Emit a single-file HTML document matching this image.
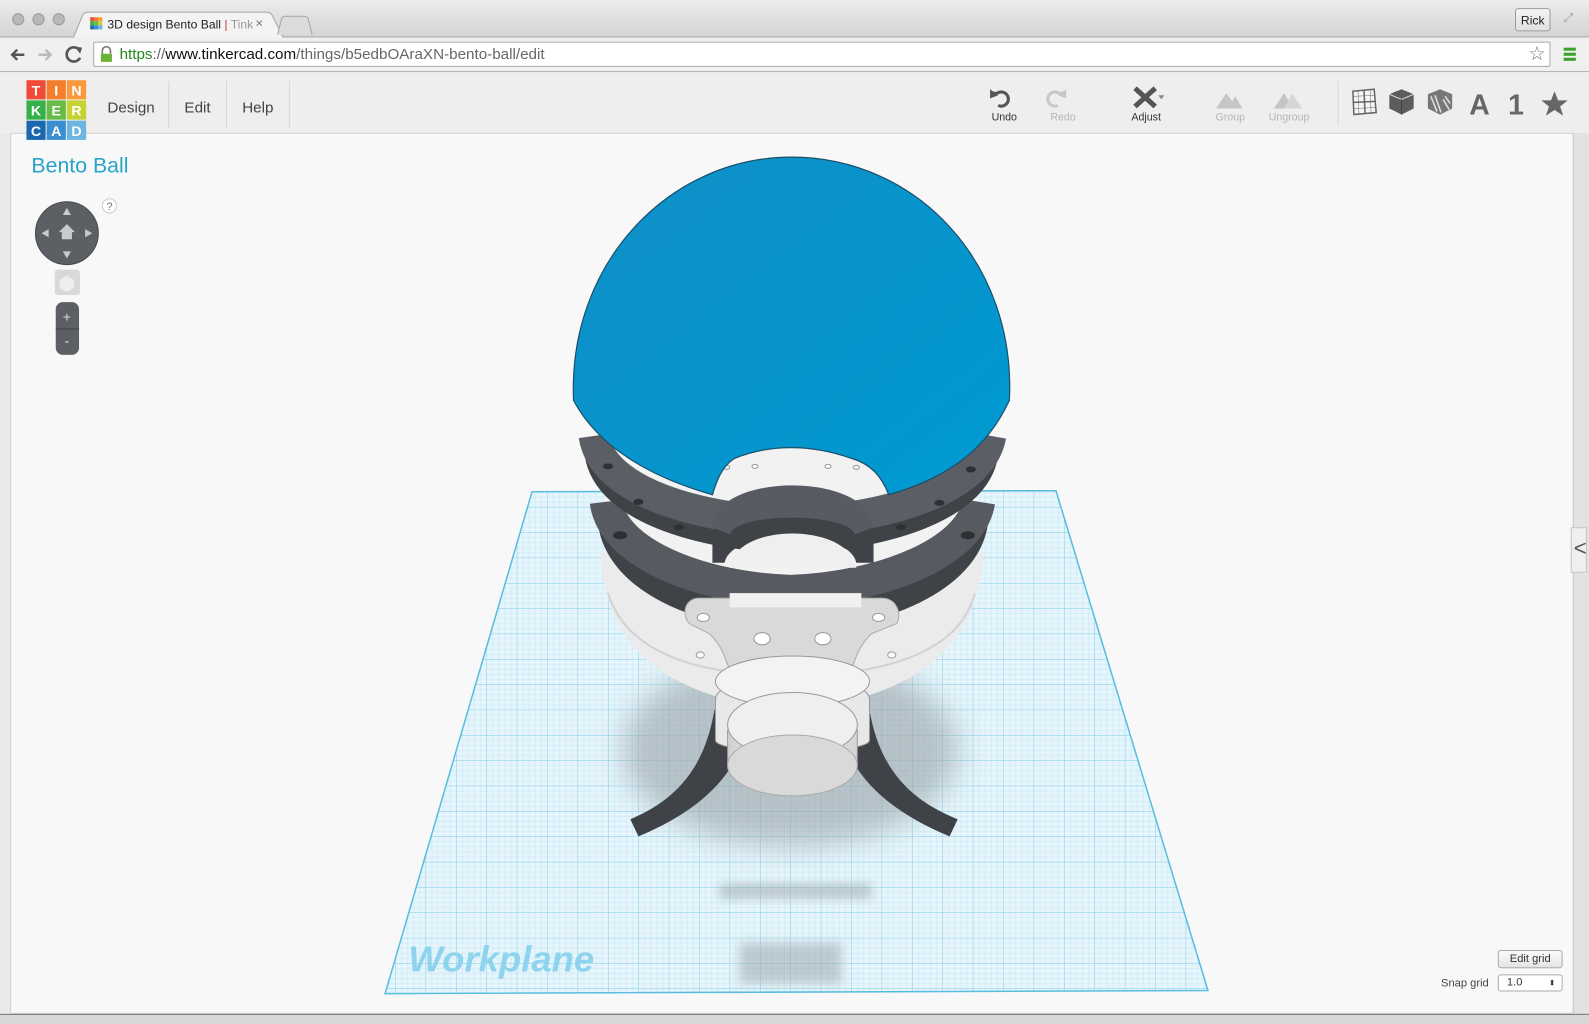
<!DOCTYPE html>
<html><head><meta charset="utf-8"><style>
*{margin:0;padding:0;box-sizing:border-box}
html,body{width:1589px;height:1024px;overflow:hidden;background:#5a5a5a}
#w{position:absolute;left:0;top:0;width:1568px;height:1010px;transform:scale(1.01339,1.01386);transform-origin:0 0;font-family:"Liberation Sans",sans-serif;background:#e9e9e9;overflow:hidden}
.abs{position:absolute}
</style></head><body><div id="w">
<!-- tab strip -->
<div class="abs" style="left:0;top:0;width:1568px;height:37px;background:linear-gradient(#ececec,#d4d4d4);border-bottom:1px solid #a8a8a8"></div>
<div class="abs" style="left:12px;top:13px;width:12px;height:12px;border-radius:50%;background:#b9b9b9;border:1px solid #9a9a9a"></div>
<div class="abs" style="left:32px;top:13px;width:12px;height:12px;border-radius:50%;background:#b9b9b9;border:1px solid #9a9a9a"></div>
<div class="abs" style="left:52px;top:13px;width:12px;height:12px;border-radius:50%;background:#b9b9b9;border:1px solid #9a9a9a"></div>
<svg class="abs" style="left:0;top:0" width="320" height="40"><path d="M72,38 L82,14 Q84,12 88,12 L262,12 Q266,12 268,14 L280,38 Z" fill="#f3f3f3" stroke="#a5a5a5"/><path d="M274,34 L278,18 Q279,16 282,16 L300,16 Q303,16 304,18 L308,34" fill="#dcdcdc" stroke="#a5a5a5"/>
<g><rect x="89" y="17" width="4" height="4" fill="#f04e37"/><rect x="93" y="17" width="4" height="4" fill="#f57e2a"/><rect x="97" y="17" width="4" height="4" fill="#f9a03c"/><rect x="89" y="21" width="4" height="4" fill="#3ab54a"/><rect x="93" y="21" width="4" height="4" fill="#6abd45"/><rect x="97" y="21" width="4" height="4" fill="#c8d531"/><rect x="89" y="25" width="4" height="4" fill="#1f6db5"/><rect x="93" y="25" width="4" height="4" fill="#3a8fd0"/><rect x="97" y="25" width="4" height="4" fill="#6bb5e0"/></g></svg>
<div class="abs" style="left:106px;top:17px;font-size:12px;color:#222;white-space:nowrap">3D design Bento Ball <span style="color:#c33">|</span> <span style="color:#999">Tink</span></div>
<div class="abs" style="left:252px;top:15px;font-size:13px;color:#777">×</div>
<div class="abs" style="left:1495px;top:8px;width:35px;height:23px;border:1px solid #9c9c9c;border-radius:3px;background:linear-gradient(#f5f5f5,#e0e0e0);font-size:12px;text-align:center;line-height:22px;color:#222">Rick</div>
<div class="abs" style="left:1543px;top:10px;font-size:12px;color:#999">⤢</div>
<!-- toolbar -->
<div class="abs" style="left:0;top:37px;width:1568px;height:34px;background:#f0f0f0;border-bottom:1px solid #b5b5b5"></div>
<svg class="abs" style="left:0;top:37px" width="92" height="34"><path d="M24,17 H12 M17,12 L12,17 L17,22" stroke="#555" stroke-width="2.4" fill="none"/><path d="M38,17 H50 M45,12 L50,17 L45,22" stroke="#bbb" stroke-width="2.4" fill="none"/><path d="M78,12 A7,7 0 1 0 79,20" stroke="#555" stroke-width="2.6" fill="none"/><path d="M74,9 L81,10 L79,16 Z" fill="#555"/></svg>
<div class="abs" style="left:92px;top:41px;width:1438px;height:25px;background:#fff;border:1px solid #a9a9a9;border-radius:2px"></div>
<svg class="abs" style="left:98px;top:45px" width="14" height="17"><path d="M3,8 V5 A4,4 0 0 1 11,5 V8" stroke="#777" stroke-width="1.6" fill="none"/><rect x="1.5" y="8" width="11" height="8" rx="1" fill="#6ab336"/></svg>
<div class="abs" style="left:118px;top:45px;font-size:15px;white-space:nowrap;color:#666"><span style="color:#1e8a1e">https</span>://<span style="color:#111">www.tinkercad.com</span>/things/b5edbOAraXN-bento-ball/edit</div>
<div class="abs" style="left:1508px;top:42px;font-size:19px;color:#777">☆</div>
<svg class="abs" style="left:1542px;top:46px" width="14" height="16"><rect x="1" y="1" width="12" height="3" fill="#3aa12a"/><rect x="1" y="6" width="12" height="3" fill="#3aa12a"/><rect x="1" y="11" width="12" height="3" fill="#3aa12a"/></svg>
<!-- app header -->
<div class="abs" style="left:0;top:72px;width:1568px;height:60px;background:#efeeec"></div>
<!-- canvas -->
<div class="abs" style="left:10px;top:131px;width:1543px;height:869px;background:#f8f8f8;border:1px solid #d0d0d0"></div>
<div class="abs" style="left:1552px;top:131px;width:16px;height:870px;background:#e2e2e2;border-left:1px solid #c8c8c8"></div>
<div class="abs" style="left:0;top:1000px;width:1568px;height:10px;background:#d8d8d8;border-top:1px solid #777"></div>
<svg class="abs" style="left:26px;top:79px;z-index:5" width="60" height="60" font-family="Liberation Sans" font-weight="bold" font-size="14" fill="#fff" text-anchor="middle">
<rect x="0" y="0" width="19" height="19" fill="#ef4a35"/><rect x="20" y="0" width="19" height="19" fill="#f47d2e"/><rect x="40" y="0" width="19" height="19" fill="#f89a3b"/>
<rect x="0" y="20" width="19" height="19" fill="#35b14a"/><rect x="20" y="20" width="19" height="19" fill="#67bb46"/><rect x="40" y="20" width="19" height="19" fill="#c5d331"/>
<rect x="0" y="40" width="19" height="19" fill="#1b68b0"/><rect x="20" y="40" width="19" height="19" fill="#3a8ecf"/><rect x="40" y="40" width="19" height="19" fill="#6cb6e1"/>
<text x="9.5" y="15">T</text><text x="29.5" y="15">I</text><text x="49.5" y="15">N</text><text x="9.5" y="35">K</text><text x="29.5" y="35">E</text><text x="49.5" y="35">R</text><text x="9.5" y="55">C</text><text x="29.5" y="55">A</text><text x="49.5" y="55">D</text></svg>
<div class="abs" style="left:106px;top:98px;font-size:15px;color:#444">Design</div>
<div class="abs" style="left:166px;top:80px;width:1px;height:46px;background:#d6d6d6"></div>
<div class="abs" style="left:182px;top:98px;font-size:15px;color:#444">Edit</div>
<div class="abs" style="left:223px;top:80px;width:1px;height:46px;background:#d6d6d6"></div>
<div class="abs" style="left:239px;top:98px;font-size:15px;color:#444">Help</div>
<div class="abs" style="left:285px;top:80px;width:1px;height:46px;background:#d6d6d6"></div>
<svg class="abs" style="left:960px;top:80px" width="608" height="48" font-family="Liberation Sans" font-size="10.5" text-anchor="middle">
<path d="M25,24 A7,7 0 1 0 24,12 L20,12" stroke="#555" stroke-width="3" fill="none"/><path d="M17,8 L17,17 L25,14 Z" fill="#555"/>
<text x="31" y="39" fill="#333">Undo</text>
<path d="M84,24 A7,7 0 1 1 85,12 L89,12" stroke="#c8c8c8" stroke-width="3" fill="none"/><path d="M92,8 L92,17 L84,14 Z" fill="#c8c8c8"/>
<text x="89" y="39" fill="#b5b5b5">Redo</text>
<path d="M160,7 L180,25 M180,7 L160,25" stroke="#555" stroke-width="5"/><path d="M183,14 L189,14 L186,18 Z" fill="#888"/>
<text x="171" y="39" fill="#333">Adjust</text>
<path d="M240,27 L250,12 L256,20 L259,15 L266,27 Z" fill="#c5c5c5"/><text x="254" y="39" fill="#b5b5b5">Group</text>
<path d="M297,27 L307,12 L313,22 L317,27 Z" fill="#c5c5c5"/><path d="M307,27 L315,12 L325,27 Z" fill="#d6d6d6"/><text x="312" y="39" fill="#b5b5b5">Ungroup</text>
<rect x="360" y="0" width="1" height="44" fill="#d6d6d6"/>
<g stroke="#666" fill="#f5f5f5" stroke-width="1.5"><path d="M375,10 L396,8 L398,31 L376,33 Z"/><path d="M386,9 L387,32 M375.5,21 L397,20" fill="none"/><path d="M380,9 L381,32 M392,8.5 L393,32 M375,15 L397,14 M376,27 L398,26" fill="none" stroke-width=".5"/></g>
<path d="M423,8 L435,13 L435,27 L423,33 L411,27 L411,13 Z" fill="#5c5c5c"/><path d="M411,13 L423,18 L435,13" stroke="#ddd" stroke-width="1" fill="none"/><path d="M423,18 V33" stroke="#444"/>
<path d="M461,8 L473,13 L473,27 L461,33 L449,27 L449,13 Z" fill="#777"/><path d="M452,15 L458,30 M456,14 L462,31 M464,18 L470,28 M466,15 L471,22" stroke="#ddd" stroke-width="1.6"/>
<text x="500" y="33" font-size="28" font-weight="bold" fill="#666">A</text>
<text x="536" y="33" font-size="28" font-weight="bold" fill="#666">1</text>
<path d="M574,10 L577.5,19 L587,19 L579.5,25 L582.5,34 L574,28.5 L565.5,34 L568.5,25 L561,19 L570.5,19 Z" fill="#666"/>
</svg>
<div class="abs" style="left:1550px;top:520px;width:16px;height:45px;background:#efefef;border:1px solid #c4c4c4"></div>
<div class="abs" style="left:1553px;top:528px;font-size:22px;color:#555">&lt;</div>
<div class="abs" style="left:31px;top:152px;font-size:21px;color:#27a4c8">Bento Ball</div>
<svg class="abs" style="left:30px;top:192px" width="95" height="165">
<circle cx="78" cy="11" r="7" fill="#fff" stroke="#ccc"/><text x="78" y="15" font-size="11" text-anchor="middle" fill="#777" font-family="Liberation Sans">?</text>
<circle cx="36" cy="38" r="31" fill="#5c5f64" stroke="#47494d"/>
<path d="M36,13 L32,20 L40,20 Z M36,63 L32,56 L40,56 Z M11,38 L18,34 L18,42 Z M61,38 L54,34 L54,42 Z" fill="#c9cacc"/>
<path d="M36,29 L28,37 L31,37 L31,44 L41,44 L41,37 L44,37 Z" fill="#c9cacc"/>
<rect x="24" y="74" width="25" height="25" rx="3" fill="#d9d9d9"/><path d="M36,80 L43,84 L43,92 L36,96 L29,92 L29,84 Z" fill="#eee"/>
<rect x="25" y="106" width="23" height="52" rx="7" fill="#5c5f64"/><rect x="25" y="132" width="23" height="1" fill="#3e4044"/>
<text x="36" y="125" font-size="14" fill="#ddd" text-anchor="middle" font-family="Liberation Sans">+</text><text x="36" y="149" font-size="14" fill="#ddd" text-anchor="middle" font-family="Liberation Sans">-</text>
</svg>
<!-- scene -->
<svg class="abs" style="left:0;top:0" width="1568" height="1010">
<defs>
<pattern id="g" width="6" height="5" patternUnits="userSpaceOnUse"><rect width="6" height="5" fill="#e6f5fb"/><path d="M0,0 H6 M0,0 V5" stroke="#b6e1f0" stroke-width="0.7"/></pattern>
<pattern id="G" width="30" height="25" patternUnits="userSpaceOnUse"><rect width="30" height="25" fill="url(#g)"/><path d="M0,0 H30 M0,0 V25" stroke="#7dcbe6" stroke-width="0.9"/></pattern>
<filter id="b" x="-50%" y="-50%" width="200%" height="200%"><feGaussianBlur stdDeviation="14"/></filter>
<filter id="b2" x="-50%" y="-50%" width="200%" height="200%"><feGaussianBlur stdDeviation="5"/></filter>
<linearGradient id="dome" x1="0" y1="0" x2="1" y2="1"><stop offset="0" stop-color="#0f8fc6"/><stop offset="1" stop-color="#0099d2"/></linearGradient>
<linearGradient id="cyl" x1="0" x2="1"><stop offset="0" stop-color="#d0d0d0"/><stop offset=".4" stop-color="#f2f2f2"/><stop offset="1" stop-color="#d4d4d4"/></linearGradient>
</defs>
<path d="M525,485 L1042,484 L1192,977 L380,980 Z" fill="url(#G)" stroke="#58bde0" stroke-width="1.5"/>
<text x="403" y="958" font-family="Liberation Sans" font-style="italic" font-weight="bold" font-size="36" fill="#8ed4ef">Workplane</text>
<ellipse cx="780" cy="740" rx="165" ry="95" fill="#98a2a8" opacity=".6" filter="url(#b)"/>
<rect x="710" y="872" width="150" height="14" fill="#98a2a8" opacity=".55" filter="url(#b2)"/>
<rect x="730" y="930" width="100" height="40" fill="#98a2a8" opacity=".5" filter="url(#b2)"/>
<!-- legs -->
<path d="M705,700 C695,760 665,790 622,808 L630,825 C690,800 728,765 738,715 Z" fill="#3f4347"/>
<path d="M858,700 C868,760 900,790 945,808 L937,825 C877,800 838,765 828,715 Z" fill="#3f4347"/>
<!-- body -->
<path d="M593,545 C596,640 660,690 780,700 C900,690 966,640 970,545 Z" fill="#ebebec"/>
<path d="M600,585 C620,650 700,665 780,668 C860,665 945,650 962,585" stroke="#d2d2d4" stroke-width="2" fill="none"/>
<ellipse cx="780" cy="500" rx="185" ry="70" fill="#f2f2f3"/>
<!-- lower ring -->
<path d="M605,515 C612,570 690,605 780,608 C870,605 952,570 960,515" stroke="#3f4347" stroke-width="30" fill="none"/>
<path d="M598,495 C604,545 690,580 780,583 C870,580 958,545 966,495" stroke="#575b61" stroke-width="32" fill="none"/>
<!-- upper ring -->
<path d="M592,448 C600,500 690,528 780,531 C870,528 962,500 970,448" stroke="#3f4347" stroke-width="30" fill="none"/>
<path d="M586,430 C594,485 690,512 780,515 C870,512 968,485 978,430" stroke="#5b5f65" stroke-width="30" fill="none"/>
<!-- arch -->
<path d="M703,535 C705,470 858,470 862,535 L862,555 L845,555 C838,520 722,520 715,555 L703,555 Z" fill="#3f4347"/>
<path d="M703,520 C705,465 858,465 862,520 L844,527 C835,505 728,505 720,527 Z" fill="#585c62"/>
<path d="M720,560 C725,515 838,515 845,560 Z" fill="#efefef"/>
<!-- holes -->
<g fill="#2e3134"><ellipse cx="600" cy="460" rx="5" ry="3"/><ellipse cx="630" cy="495" rx="5" ry="3"/><ellipse cx="670" cy="520" rx="5" ry="3"/><ellipse cx="889" cy="520" rx="5" ry="3"/><ellipse cx="927" cy="496" rx="5" ry="3"/><ellipse cx="958" cy="463" rx="5" ry="3"/><ellipse cx="612" cy="528" rx="7" ry="4"/><ellipse cx="955" cy="528" rx="7" ry="4"/></g>
<!-- bracket -->
<path d="M690,590 L870,590 C885,590 890,605 885,615 L860,625 C845,640 845,650 840,660 L720,660 C715,650 715,640 700,625 L680,615 C672,605 676,590 690,590 Z" fill="#d9d9da" stroke="#aaa" stroke-width="1"/>
<rect x="720" y="585" width="130" height="14" fill="#f0f0f0"/>
<g fill="#fff" stroke="#999"><ellipse cx="694" cy="609" rx="6" ry="4"/><ellipse cx="867" cy="609" rx="6" ry="4"/><ellipse cx="752" cy="630" rx="8" ry="6"/><ellipse cx="812" cy="630" rx="8" ry="6"/></g>
<g fill="#fff" stroke="#999"><ellipse cx="717" cy="461" rx="3" ry="2"/><ellipse cx="745" cy="460" rx="3" ry="2"/><ellipse cx="817" cy="460" rx="3" ry="2"/><ellipse cx="845" cy="461" rx="3" ry="2"/><ellipse cx="691" cy="646" rx="4" ry="3"/><ellipse cx="880" cy="646" rx="4" ry="3"/></g>
<!-- cylinder -->
<path d="M706,690 C706,660 858,660 858,690 L858,730 C858,745 706,745 706,730 Z" fill="#e8e8e8" stroke="#999"/>
<ellipse cx="782" cy="672" rx="76" ry="25" fill="#f3f3f3" stroke="#999"/>
<path d="M718,720 L718,755 C718,790 846,790 846,755 L846,720 Z" fill="url(#cyl)" stroke="#999"/>
<ellipse cx="782" cy="715" rx="64" ry="32" fill="#efefef" stroke="#999"/>
<ellipse cx="782" cy="755" rx="64" ry="30" fill="#d9d9d9" stroke="#aaa"/>
<!-- dome -->
<path d="M566,395 C560,260 660,155 781,155 C905,155 1003,260 996,395 C975,440 940,470 877,488 C870,470 860,458 840,452 C800,438 760,438 725,452 C712,460 707,475 703,488 C640,470 590,440 566,395 Z" fill="url(#dome)" stroke="#1b4f6a" stroke-width="1.2"/>
</svg>
<!-- bottom right -->
<div class="abs" style="left:1478px;top:937px;width:64px;height:18px;border:1px solid #aaa;border-radius:3px;background:linear-gradient(#fafafa,#e4e4e4);font-size:11px;text-align:center;line-height:16px;color:#333">Edit grid</div>
<div class="abs" style="left:1422px;top:964px;font-size:11px;color:#444">Snap grid</div>
<div class="abs" style="left:1478px;top:961px;width:64px;height:17px;border:1px solid #aaa;border-radius:3px;background:#fff;font-size:11px;line-height:15px;color:#333;padding-left:8px">1.0<span style="position:absolute;right:6px;font-size:8px">⬍</span></div>
</div></body></html>
